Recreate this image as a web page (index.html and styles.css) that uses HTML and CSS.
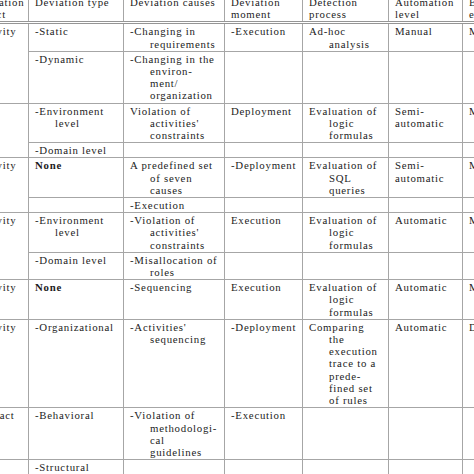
FILE: index.html
```html
<!DOCTYPE html>
<html>
<head>
<meta charset="utf-8">
<link rel="stylesheet" href="styles.css">
</head>
<body>
<table class="dev">
  <colgroup>
    <col class="c0"><col class="c1"><col class="c2"><col class="c3"><col class="c4"><col class="c5"><col class="c6">
  </colgroup>
  <thead>
    <tr>
      <th>Deviation<br>object</th>
      <th>Deviation type</th>
      <th>Deviation causes</th>
      <th>Deviation<br>moment</th>
      <th>Detection<br>process</th>
      <th>Automation<br>level</th>
      <th>Evaluation<br>e-learning</th>
    </tr>
  </thead>
  <tbody>
    <tr>
      <td rowspan="2">Activity</td>
      <td class="hang">-Static</td>
      <td class="hang">-Changing in<br>requirements</td>
      <td>-Execution</td>
      <td class="hang">Ad-hoc<br>analysis</td>
      <td>Manual</td>
      <td>Medical</td>
    </tr>
    <tr>
      <td class="hang">-Dynamic</td>
      <td class="hang">-Changing in the<br>environ-<br>ment/<br>organization</td>
      <td></td><td></td><td></td><td></td>
    </tr>
    <tr>
      <td rowspan="2"></td>
      <td class="hang">-Environment<br>level</td>
      <td class="hang">Violation of<br>activities'<br>constraints</td>
      <td>Deployment</td>
      <td class="hang">Evaluation of<br>logic<br>formulas</td>
      <td>Semi-<br>automatic</td>
      <td>Medical</td>
    </tr>
    <tr>
      <td class="hang">-Domain level</td>
      <td></td><td></td><td></td><td></td><td></td>
    </tr>
    <tr>
      <td rowspan="2">Activity</td>
      <td class="hang"><b>None</b></td>
      <td class="hang">A predefined set<br>of seven<br>causes</td>
      <td>-Deployment</td>
      <td class="hang">Evaluation of<br>SQL<br>queries</td>
      <td>Semi-<br>automatic</td>
      <td>Medical</td>
    </tr>
    <tr>
      <td></td>
      <td class="hang">-Execution</td>
      <td></td><td></td><td></td><td></td>
    </tr>
    <tr>
      <td rowspan="2">Activity</td>
      <td class="hang">-Environment<br>level</td>
      <td class="hang">-Violation of<br>activities'<br>constraints</td>
      <td>Execution</td>
      <td class="hang">Evaluation of<br>logic<br>formulas</td>
      <td>Automatic</td>
      <td>Medical</td>
    </tr>
    <tr>
      <td class="hang">-Domain level</td>
      <td class="hang">-Misallocation of<br>roles</td>
      <td></td><td></td><td></td><td></td>
    </tr>
    <tr>
      <td>Activity</td>
      <td class="hang"><b>None</b></td>
      <td class="hang">-Sequencing</td>
      <td>Execution</td>
      <td class="hang">Evaluation of<br>logic<br>formulas</td>
      <td>Automatic</td>
      <td>Medical</td>
    </tr>
    <tr>
      <td>Activity</td>
      <td class="hang">-Organizational</td>
      <td class="hang">-Activities'<br>sequencing</td>
      <td>-Deployment</td>
      <td class="hang">Comparing<br>the<br>execution<br>trace to a<br>prede-<br>fined set<br>of rules</td>
      <td>Automatic</td>
      <td>Development</td>
    </tr>
    <tr>
      <td>Artifact</td>
      <td class="hang">-Behavioral</td>
      <td class="hang">-Violation of<br>methodologi-<br>cal<br>guidelines</td>
      <td>-Execution</td>
      <td></td><td></td><td></td>
    </tr>
    <tr>
      <td></td>
      <td class="hang">-Structural</td>
      <td></td><td></td><td></td><td></td><td></td>
    </tr>
  </tbody>
</table>
</body>
</html>
```

FILE: styles.css
```css
html, body {
  margin: 0;
  padding: 0;
  background: #ffffff;
  overflow: hidden;
  width: 474px;
  height: 474px;
}

.dev {
  border-collapse: collapse;
  table-layout: fixed;
  width: 574px;
  margin-top: -6px;
  margin-left: -32px;
  font-family: "Liberation Serif", "Times New Roman", serif;
  font-size: 10.8px;
  letter-spacing: 0.75px;
  line-height: 12.2px;
  color: #1c1c1c;
}

.c0 { width: 60px; }
.c1 { width: 95px; }
.c2 { width: 101px; }
.c3 { width: 78px; }
.c4 { width: 86px; }
.c5 { width: 74px; }
.c6 { width: 80px; }

.dev th,
.dev td {
  border: 1px solid #a6a6a6;
  padding: 1px 4px 1px 6px;
  vertical-align: top;
  text-align: left;
  white-space: nowrap;
  overflow: hidden;
}

.dev th {
  font-weight: normal;
  border-bottom: 3px double #959595;
}

.dev td.hang {
  padding-left: 26px;
  text-indent: -20px;
}

.dev b {
  font-weight: bold;
}
```
